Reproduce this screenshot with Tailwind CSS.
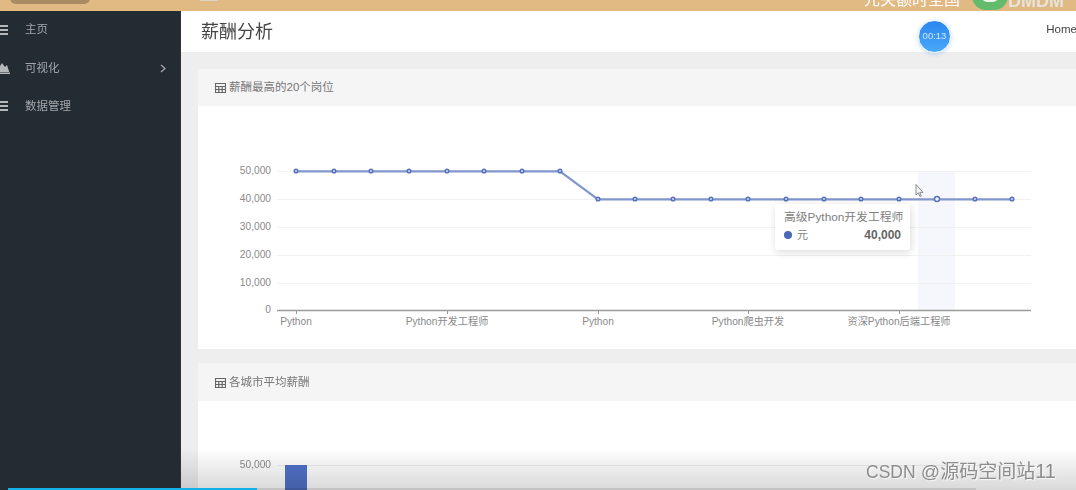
<!DOCTYPE html>
<html lang="en">
<head>
  <meta charset="UTF-8">
  <title>薪酬分析</title>
  <script src="https://cdn.jsdelivr.net/npm/@tailwindcss/browser@4"></script>
</head>
<body class="bg-[#eeeeee] overflow-hidden font-['Liberation_Sans','Noto_Sans_CJK_SC',sans-serif]">
<div class="relative w-[1076px] h-[490px] overflow-hidden">
<div class="w-full h-full flex flex-col blur-[0.4px]">

  <!-- top strip -->
  <div class="h-[11px] shrink-0 bg-[#e0b983] relative overflow-hidden">
    <div class="absolute left-[10px] -top-[8px] w-[80px] h-[12px] rounded-full bg-[#a88a63]"></div>
    <div class="absolute left-[200px] top-0 w-[18px] h-[1px] bg-[#d8d4c8]"></div>
    <div class="absolute left-[864px] -top-[8px] text-[16px] leading-[16px] text-white whitespace-nowrap">元关额时全国</div>
    <div class="absolute left-[972px] -top-[18px] w-[36px] h-[28px] rounded-full bg-[#63bb6c]"></div>
    <div class="absolute left-[982px] -top-[8px] w-[16px] h-[10px] rounded-full bg-[#eef6ea]"></div>
    <div class="absolute left-[1008px] -top-[8px] text-[18px] leading-[18px] font-bold text-[#e6e3da] whitespace-nowrap">DMDM</div>
  </div>

  <div class="flex flex-1 min-h-0">
    <!-- sidebar -->
    <aside class="w-[181px] shrink-0 bg-[#232b33] text-[#a3a7aa] text-[11.5px] border-r border-[#2d343b]">
      <div class="h-[38px] flex items-center pl-[25px] relative">
        <svg class="absolute -left-[2px] top-[14px]" width="11" height="10" viewBox="0 0 11 10" fill="#b5b8ba"><rect y="0" width="10" height="2"/><rect y="4" width="10" height="2"/><rect y="8" width="10" height="2"/></svg>
        主页
      </div>
      <div class="h-[38px] flex items-center pl-[25px] pt-[1px] relative">
        <svg class="absolute left-0 top-[13px]" width="11" height="12" viewBox="0 0 11 12" fill="#b5b8ba"><path d="M0 4 L2 1 L5 5 L7 3 L9 9 L9 10 L0 10Z"/><rect y="10.500" width="10" height="1.500"/></svg>
        可视化
        <svg class="absolute left-[160px] top-[15px]" width="6" height="9" viewBox="0 0 6 9" fill="none" stroke="#a9adb0" stroke-width="1.2"><path d="M1 1 L5 4.5 L1 8"/></svg>
      </div>
      <div class="h-[38px] flex items-center pl-[25px] pt-[1px] relative">
        <svg class="absolute -left-[2px] top-[14px]" width="11" height="10" viewBox="0 0 11 10" fill="#b5b8ba"><rect y="0" width="10" height="2"/><rect y="4" width="10" height="2"/><rect y="8" width="10" height="2"/></svg>
        数据管理
      </div>
    </aside>

    <main class="flex-1 min-w-0 flex flex-col">
      <!-- page heading -->
      <header class="h-[41px] shrink-0 bg-white flex items-center justify-between pl-[20px] pr-0">
        <h1 class="text-[18px] text-[#444444] relative top-[1px]">薪酬分析</h1>
        <span class="text-[11.5px] text-[#444444] relative -top-[2px] -mr-[1px]">Home</span>
      </header>

      <div class="pl-[17px] pt-[17px] flex flex-col gap-[14px]">
        <!-- card 1 -->
        <section class="bg-white w-[890px] shrink-0">
          <div class="h-[37px] bg-[#f5f5f5] flex items-center pl-[17px] gap-[3px] text-[11.5px] text-[#777777] pt-[1px]">
            <svg width="11" height="10" viewBox="0 0 11 10" fill="none" stroke="#666666" stroke-width="1.2"><path d="M.5.5h10v9H.5zM.5 3.5h10M.5 6.5h10M3.8 3.5v6M7.2 3.5v6"/></svg>
            薪酬最高的20个岗位
          </div>
          <svg width="890" height="243" viewBox="198 106 890 243" class="block" font-size="10.200" fill="#8a8a8a" font-family="'Liberation Sans','Noto Sans CJK SC',sans-serif">
            <rect x="918" y="172" width="37" height="138" fill="#f5f7fc"/>
            <g stroke="#f1f1f1">
              <path d="M277 171.500H1031M277 199.500H1031M277 227.500H1031M277 255.500H1031M277 283.500H1031"/>
            </g>
            <path d="M277 310.500H1031" stroke="#9a9a9a" stroke-width="1.500"/>
            <path d="M296.500 310V314M447.500 310V314M598.500 310V314M748.500 310V314M899.500 310V314" stroke="#9a9a9a"/>
            <g text-anchor="end">
              <text x="271" y="174">50,000</text>
              <text x="271" y="202">40,000</text>
              <text x="271" y="230">30,000</text>
              <text x="271" y="258">20,000</text>
              <text x="271" y="286">10,000</text>
              <text x="271" y="313">0</text>
            </g>
            <g text-anchor="middle">
              <text x="296" y="325">Python</text>
              <text x="447" y="325">Python开发工程师</text>
              <text x="598" y="325">Python</text>
              <text x="748" y="325">Python爬虫开发</text>
              <text x="899" y="325">资深Python后端工程师</text>
            </g>
            <path d="M296 171.300H560L598 199.300H1012" fill="none" stroke="#8096cc" stroke-width="2.200"/>
            <g fill="#c9d2ec" stroke="#5a72bb" stroke-width="1.500">
              <circle cx="296" cy="171" r="1.800"/><circle cx="334" cy="171" r="1.800"/><circle cx="371" cy="171" r="1.800"/><circle cx="409" cy="171" r="1.800"/>
              <circle cx="447" cy="171" r="1.800"/><circle cx="484" cy="171" r="1.800"/><circle cx="522" cy="171" r="1.800"/><circle cx="560" cy="171" r="1.800"/>
              <circle cx="598" cy="199" r="1.800"/><circle cx="635" cy="199" r="1.800"/><circle cx="673" cy="199" r="1.800"/><circle cx="711" cy="199" r="1.800"/>
              <circle cx="748" cy="199" r="1.800"/><circle cx="786" cy="199" r="1.800"/><circle cx="824" cy="199" r="1.800"/><circle cx="861" cy="199" r="1.800"/>
              <circle cx="899" cy="199" r="1.800"/><circle cx="937" cy="199" r="2.500" fill="#ffffff"/><circle cx="975" cy="199" r="1.800"/><circle cx="1012" cy="199" r="1.800"/>
            </g>
            <path d="M916 184.500V195L918.300 192.800L920 196.500L921.300 196L919.800 192.400H923Z" fill="#f4f4f4" stroke="#70757a" stroke-width=".8"/>
          </svg>
        </section>

        <!-- card 2 -->
        <section class="bg-white w-[890px] shrink-0">
          <div class="h-[38px] bg-[#f5f5f5] flex items-center pl-[17px] gap-[3px] text-[11.5px] text-[#777777] pt-[1px]">
            <svg width="11" height="10" viewBox="0 0 11 10" fill="none" stroke="#666666" stroke-width="1.2"><path d="M.5.5h10v9H.5zM.5 3.5h10M.5 6.5h10M3.8 3.5v6M7.2 3.5v6"/></svg>
            各城市平均薪酬
          </div>
          <svg width="890" height="89" viewBox="198 401 890 89" class="block" font-size="10.200" fill="#8a8a8a" font-family="'Liberation Sans','Noto Sans CJK SC',sans-serif">
            <path d="M277 465.500H1031" stroke="#eeeeee"/>
            <text x="271" y="468" text-anchor="end">50,000</text>
            <rect x="285" y="465" width="22" height="25" fill="#5272c8"/>
          </svg>
        </section>
      </div>
    </main>
  </div>

  <!-- recording timer -->
  <div class="absolute left-[918px] top-[20px] w-[33px] h-[33px] rounded-full bg-gradient-to-b from-[#2b86ee] to-[#4aa8fa] border border-[#e6f1fb] shadow-[0_1px_4px_rgba(60,130,220,0.3)] flex items-center justify-center text-[9.5px] text-[#cfe5fb]">00:13</div>

  <!-- chart tooltip -->
  <div class="absolute left-[775px] top-[204px] w-[135px] h-[46px] bg-white rounded-[3px] shadow-[1px_2px_8px_rgba(0,0,0,0.15)] px-[9px] pt-[5px] text-[11.8px] text-[#808080]">
    <div class="leading-[16px] whitespace-nowrap">高级Python开发工程师</div>
    <div class="flex items-center leading-[20px]">
      <span class="w-[8px] h-[8px] rounded-full bg-[#4a68b8] mr-[5px]"></span>
      <span class="text-[11px]">元</span>
      <span class="ml-auto font-bold text-[12px] text-[#666666]">40,000</span>
    </div>
  </div>

</div>

  <!-- video player fade + progress -->
  <div class="absolute left-[181px] right-0 bottom-0 h-[42px] bg-gradient-to-b from-black/0 to-black/15 pointer-events-none"></div>
  <div class="absolute left-[257px] bottom-0 w-[719px] h-[2px] bg-black/10"></div>
  <div class="absolute left-[8px] bottom-0 w-[249px] h-[2px] bg-[#12b1e8]"></div>
  <div class="absolute left-[866px] top-[461px] text-[19px] leading-[20px] text-[#8c8c8c] whitespace-nowrap [text-shadow:1px_1px_1px_rgba(255,255,255,0.8)]"><span class="text-[17.5px]">CSDN</span> @源码空间站<span class="text-[20px]">11</span></div>
</div>
</body>
</html>
